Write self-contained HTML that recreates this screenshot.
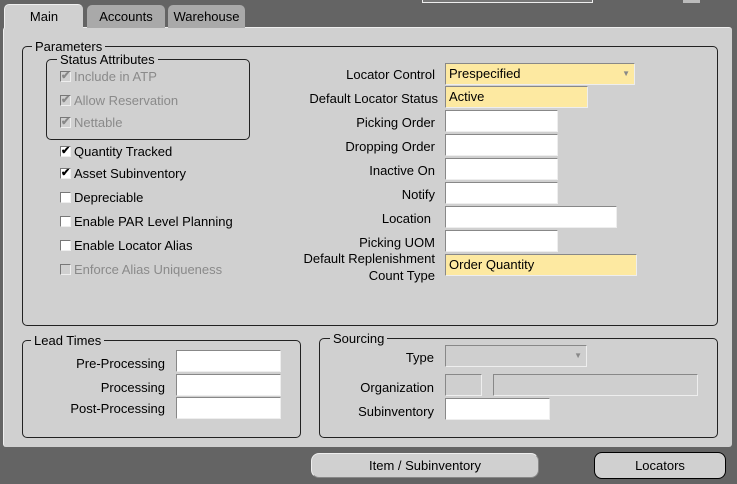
<!DOCTYPE html>
<html><head><meta charset="utf-8"><style>
*{margin:0;padding:0;box-sizing:border-box}
body{width:737px;height:484px;background:#646464;position:relative;overflow:hidden;font-family:"Liberation Sans",Arial,sans-serif;font-size:13px;color:#000}
.a{position:absolute}
.panel{left:3px;top:27px;width:729px;height:420px;background:#d0d0d0;border-radius:3px;border-top:1px solid #eee;border-left:1px solid #eee}
.tab{top:5px;height:23px;background:#a9a9a9;border-radius:5px 5px 0 0;text-align:center;line-height:24px;font-size:13px}
.fs{border:1px solid #222;border-radius:5px}
.lg{background:#d0d0d0;padding:0 3px;font-size:13px;line-height:13px}
.f{height:22px;background:#fff;border:1px solid #888;border-right-color:#eee;border-bottom-color:#eee;padding-left:3px;line-height:20px;font-size:13px}
.y{background:#fde9a1}
.g{background:#cfcfcf}
.lb{text-align:right;font-size:13px}
.cb{width:11px;height:11px;background:#fff;border:1px solid #777;border-right-color:#eee;border-bottom-color:#eee;font-size:11px;line-height:9px;text-align:center;font-weight:bold}
.dis .cb{background:#d0d0d0;color:#888}
.dis{color:#8a8a8a}
.ct{font-size:13px}
.btn{height:25px;border-radius:8px;text-align:center;line-height:24px;font-size:13px;background:#d0d0d0}
</style></head><body>
<div class="a" style="left:422px;top:-2px;width:171px;height:5px;border:1px solid #eee;background:#777"></div>
<div class="a" style="left:683px;top:-2px;width:17px;height:5px;background:#bbb"></div>
<div class="a panel"></div>
<div class="a tab" style="left:4px;top:4px;width:79px;height:24px;background:#d0d0d0;border-top:1px solid #eee;border-left:1px solid #eee">Main</div>
<div class="a tab" style="left:87px;width:78px">Accounts</div>
<div class="a tab" style="left:168px;width:77px">Warehouse</div>

<div class="a fs" style="left:22px;top:46px;width:696px;height:280px"></div>
<div class="a lg" style="left:32px;top:40px">Parameters</div>
<div class="a fs" style="left:46px;top:59px;width:204px;height:81px"></div>
<div class="a lg" style="left:57px;top:53px">Status Attributes</div>

<div class="a dis" style="left:60px;top:71px"><div class="a cb">✔</div><div class="a ct" style="left:14px;top:-2px;white-space:nowrap">Include in ATP</div></div>
<div class="a dis" style="left:60px;top:95px"><div class="a cb">✔</div><div class="a ct" style="left:14px;top:-2px;white-space:nowrap">Allow Reservation</div></div>
<div class="a dis" style="left:60px;top:117px"><div class="a cb">✔</div><div class="a ct" style="left:14px;top:-2px;white-space:nowrap">Nettable</div></div>

<div class="a" style="left:60px;top:146px"><div class="a cb">✔</div><div class="a ct" style="left:14px;top:-2px;white-space:nowrap">Quantity Tracked</div></div>
<div class="a" style="left:60px;top:168px"><div class="a cb">✔</div><div class="a ct" style="left:14px;top:-2px;white-space:nowrap">Asset Subinventory</div></div>
<div class="a" style="left:60px;top:192px"><div class="a cb"></div><div class="a ct" style="left:14px;top:-2px;white-space:nowrap">Depreciable</div></div>
<div class="a" style="left:60px;top:216px"><div class="a cb"></div><div class="a ct" style="left:14px;top:-2px;white-space:nowrap">Enable PAR Level Planning</div></div>
<div class="a" style="left:60px;top:240px"><div class="a cb"></div><div class="a ct" style="left:14px;top:-2px;white-space:nowrap">Enable Locator Alias</div></div>
<div class="a dis" style="left:60px;top:264px"><div class="a cb"></div><div class="a ct" style="left:14px;top:-2px;white-space:nowrap">Enforce Alias Uniqueness</div></div>

<div class="a lb" style="left:235px;width:200px;top:67px">Locator Control</div>
<div class="a f y" style="left:445px;top:63px;width:190px">Prespecified<span class="a" style="right:4px;top:0;color:#888;font-size:8px">▼</span></div>
<div class="a lb" style="left:235px;width:203px;top:91px">Default Locator Status</div>
<div class="a f y" style="left:445px;top:86px;width:143px">Active</div>
<div class="a lb" style="left:235px;width:200px;top:115px">Picking Order</div>
<div class="a f" style="left:445px;top:110px;width:113px"></div>
<div class="a lb" style="left:235px;width:200px;top:139px">Dropping Order</div>
<div class="a f" style="left:445px;top:134px;width:113px"></div>
<div class="a lb" style="left:235px;width:200px;top:163px">Inactive On</div>
<div class="a f" style="left:445px;top:158px;width:113px"></div>
<div class="a lb" style="left:235px;width:200px;top:187px">Notify</div>
<div class="a f" style="left:445px;top:182px;width:113px"></div>
<div class="a lb" style="left:235px;width:196px;top:211px">Location</div>
<div class="a f" style="left:445px;top:206px;width:172px"></div>
<div class="a lb" style="left:235px;width:200px;top:235px">Picking UOM</div>
<div class="a f" style="left:445px;top:230px;width:113px"></div>
<div class="a lb" style="left:235px;width:200px;top:250px;line-height:17px">Default Replenishment<br>Count Type</div>
<div class="a f y" style="left:445px;top:254px;width:192px">Order Quantity</div>

<div class="a fs" style="left:22px;top:340px;width:279px;height:98px"></div>
<div class="a lg" style="left:31px;top:334px">Lead Times</div>
<div class="a lb" style="left:30px;width:135px;top:356px">Pre-Processing</div>
<div class="a f" style="left:176px;top:350px;width:105px"></div>
<div class="a lb" style="left:30px;width:135px;top:380px">Processing</div>
<div class="a f" style="left:176px;top:374px;width:105px"></div>
<div class="a lb" style="left:30px;width:135px;top:401px">Post-Processing</div>
<div class="a f" style="left:176px;top:397px;width:105px"></div>

<div class="a fs" style="left:319px;top:338px;width:399px;height:100px"></div>
<div class="a lg" style="left:330px;top:332px">Sourcing</div>
<div class="a lb" style="left:300px;width:134px;top:350px">Type</div>
<div class="a f g" style="left:445px;top:345px;width:142px"><span class="a" style="right:4px;top:0;color:#888;font-size:8px">▼</span></div>
<div class="a lb" style="left:300px;width:134px;top:380px">Organization</div>
<div class="a f g" style="left:445px;top:374px;width:37px"></div>
<div class="a f g" style="left:493px;top:374px;width:205px"></div>
<div class="a lb" style="left:300px;width:134px;top:404px">Subinventory</div>
<div class="a f" style="left:445px;top:398px;width:105px"></div>

<div class="a btn" style="left:311px;top:453px;width:228px;border:1px solid #eee;border-right-color:#888;border-bottom-color:#888">Item / Subinventory</div>
<div class="a btn" style="left:594px;top:452px;width:132px;height:27px;border:1px solid #000;line-height:26px">Locators</div>
</body></html>
